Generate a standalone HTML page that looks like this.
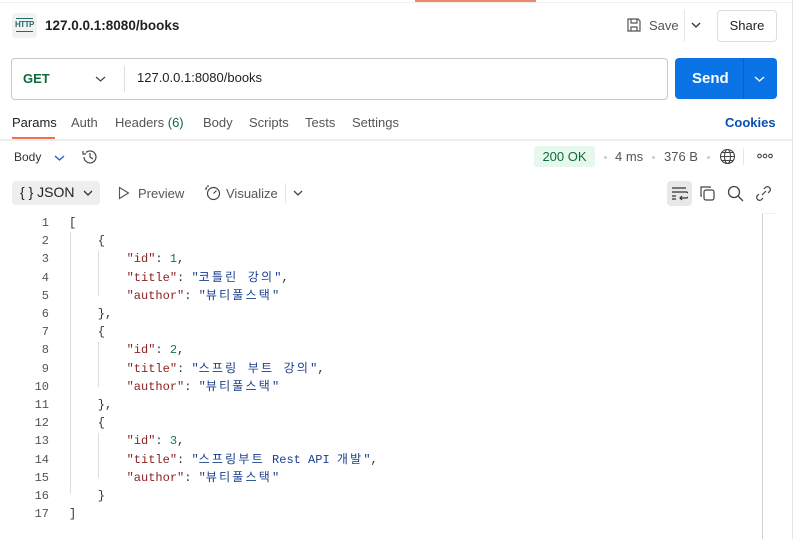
<!DOCTYPE html>
<html><head><meta charset="utf-8"><style>
*{margin:0;padding:0;box-sizing:border-box}
body{width:800px;height:539px;background:#fff;font-family:"Liberation Sans","Noto Sans CJK KR",sans-serif;color:#212121;position:relative;overflow:hidden;font-size:13px}
.a{position:absolute}
.code{font-family:"Liberation Mono","Noto Sans CJK KR",monospace;font-size:12px;white-space:pre;line-height:18.2px}
.k{color:#8a1f1f}.s{color:#1a3f8c}.n{color:#0b7a4f}.p{color:#333}
.h{letter-spacing:2.2px}
</style></head><body>
<div class="a" style="left:0;top:0;width:792px;height:3px;border-bottom:1px solid #eee"></div>
<div class="a" style="left:415px;top:0;width:121px;height:2px;background:#f08a6a"></div>
<div class="a" style="left:792px;top:0;width:1px;height:539px;background:#e6e6e6"></div>
<div class="a" style="left:12px;top:13px;width:25px;height:25px;background:#f2f2f2;border-radius:4px"></div>
<div class="a" style="left:15px;top:20px;font-size:8px;color:#1f6e6e;font-weight:bold;letter-spacing:-0.5px">HTTP</div>
<div class="a" style="left:16px;top:18px;width:17px;height:1px;background:#1f6e6e"></div>
<div class="a" style="left:16px;top:31px;width:17px;height:1px;background:#1f6e6e"></div>
<div class="a" style="left:45px;top:18px;font-size:13.5px;font-weight:bold;color:#222">127.0.0.1:8080/books</div>
<svg class="a" style="left:626px;top:17px" width="16" height="16" viewBox="0 0 16 16" fill="none" stroke="#555" stroke-width="1.2"><path d="M2 2h10l2 2v10H2z M5 2v4h6V2 M5 14v-4h6v4"/></svg>
<div class="a" style="left:649px;top:18px;color:#555;font-size:13px">Save</div>
<div class="a" style="left:684px;top:10px;width:1px;height:32px;background:#e6e6e6"></div>
<svg class="a" style="left:691px;top:21px" width="10" height="8"><path d="M1 2l4 4 4-4" stroke="#333" fill="none" stroke-width="1.3"/></svg>
<div class="a" style="left:717px;top:10px;width:60px;height:32px;border:1px solid #ddd;border-radius:4px;text-align:center;line-height:30px;color:#222">Share</div>
<div class="a" style="left:11px;top:58px;width:657px;height:42px;border:1px solid #c8c8c8;border-radius:4px"></div>
<div class="a" style="left:23px;top:71px;color:#0f6b3c;font-weight:bold;font-size:13px">GET</div>
<svg class="a" style="left:95px;top:75px" width="11" height="8"><path d="M1 2l4.5 4 4.5-4" stroke="#444" fill="none" stroke-width="1.2"/></svg>
<div class="a" style="left:124px;top:66px;width:1px;height:26px;background:#ddd"></div>
<div class="a" style="left:137px;top:70px;color:#222;font-size:13px">127.0.0.1:8080/books</div>
<div class="a" style="left:675px;top:58px;width:102px;height:41px;background:#0a73e6;border-radius:4px"></div>
<div class="a" style="left:743px;top:58px;width:1px;height:41px;background:#0a5fc0"></div>
<div class="a" style="left:692px;top:70px;color:#fff;font-weight:bold;font-size:15px">Send</div>
<svg class="a" style="left:754px;top:75px" width="11" height="8"><path d="M1 2l4.5 4 4.5-4" stroke="#fff" fill="none" stroke-width="1.3"/></svg>
<div class="a" style="top:115px;left:12px;color:#222">Params</div>
<div class="a" style="top:115px;left:71px;color:#555">Auth</div>
<div class="a" style="top:115px;left:115px;color:#555">Headers <span style="color:#0f6b3c">(6)</span></div>
<div class="a" style="top:115px;left:203px;color:#555">Body</div>
<div class="a" style="top:115px;left:249px;color:#555">Scripts</div>
<div class="a" style="top:115px;left:305px;color:#555">Tests</div>
<div class="a" style="top:115px;left:352px;color:#555">Settings</div>
<div class="a" style="top:115px;left:725px;color:#0b4fb0;font-weight:bold">Cookies</div>
<div class="a" style="left:12px;top:137px;width:43px;height:2px;background:#f07050"></div>
<div class="a" style="left:0;top:139px;width:792px;height:2px;background:#eee"></div>
<div class="a" style="left:14px;top:150px;font-size:12px;color:#333">Body</div>
<svg class="a" style="left:54px;top:154px" width="11" height="8"><path d="M1 2l4.5 4 4.5-4" stroke="#1b5fc0" fill="none" stroke-width="1.3"/></svg>
<svg class="a" style="left:81px;top:148px" width="18" height="18" viewBox="0 0 18 18" fill="none" stroke="#444" stroke-width="1.2"><path d="M3 9a6 6 0 1 0 2-4.5M2 3v3h3M9 5v4l3 2"/></svg>
<div class="a" style="left:534px;top:146px;width:61px;height:21px;background:#e6f8ee;border-radius:3px;color:#0f6b3c;text-align:center;line-height:21px">200 OK</div>
<div class="a" style="left:604px;top:156px;width:3px;height:3px;background:#ccc;border-radius:50%"></div>
<div class="a" style="left:615px;top:149px;color:#555">4 ms</div>
<div class="a" style="left:652px;top:156px;width:3px;height:3px;background:#ccc;border-radius:50%"></div>
<div class="a" style="left:664px;top:149px;color:#555">376 B</div>
<div class="a" style="left:707px;top:156px;width:3px;height:3px;background:#ccc;border-radius:50%"></div>
<svg class="a" style="left:719px;top:148px" width="17" height="17" viewBox="0 0 17 17" fill="none" stroke="#444" stroke-width="1.1"><circle cx="8.5" cy="8.5" r="7"/><ellipse cx="8.5" cy="8.5" rx="3" ry="7"/><path d="M1.5 8.5h14M3 4.5h11M3 12.5h11"/></svg>
<div class="a" style="left:743px;top:148px;width:1px;height:17px;background:#e6e6e6"></div>
<svg class="a" style="left:757px;top:153px" width="16" height="6" fill="none" stroke="#444" stroke-width="1.1"><circle cx="2.5" cy="3" r="1.8"/><circle cx="8" cy="3" r="1.8"/><circle cx="13.5" cy="3" r="1.8"/></svg>
<div class="a" style="left:12px;top:181px;width:88px;height:24px;background:#eee;border-radius:4px"></div>
<div class="a" style="left:20px;top:184px;font-size:14px;color:#222">{ } JSON</div>
<svg class="a" style="left:83px;top:190px" width="10" height="7"><path d="M1 1l4 4 4-4" stroke="#333" fill="none" stroke-width="1.3"/></svg>
<svg class="a" style="left:118px;top:186px" width="12" height="14"><path d="M1.5 1.5v11l9-5.5z" stroke="#555" fill="none" stroke-width="1.1"/></svg>
<div class="a" style="left:138px;top:186px;color:#555">Preview</div>
<svg class="a" style="left:204px;top:184px" width="17" height="17" viewBox="0 0 17 17" fill="none" stroke="#444" stroke-width="1.2"><circle cx="9.5" cy="9.5" r="6"/><path d="M9.5 9.5l3-3M2 3l1 1M4 1v2M1 5h2"/></svg>
<div class="a" style="left:226px;top:186px;color:#555">Visualize</div>
<div class="a" style="left:285px;top:183px;width:1px;height:20px;background:#e6e6e6"></div>
<svg class="a" style="left:293px;top:190px" width="10" height="7"><path d="M1 1l4 4 4-4" stroke="#444" fill="none" stroke-width="1.3"/></svg>
<div class="a" style="left:667px;top:181px;width:25px;height:25px;background:#e8e8e8;border-radius:4px"></div>
<svg class="a" style="left:671px;top:186px" width="17" height="15" fill="none" stroke="#333" stroke-width="1.2"><path d="M1 2h14M1 6h14a3 3 0 0 1 0 6H9M11 10l-2 2 2 2M1 10h4M1 13h4"/></svg>
<svg class="a" style="left:699px;top:185px" width="17" height="17" fill="none" stroke="#444" stroke-width="1.2"><rect x="5" y="5" width="10" height="10" rx="2"/><path d="M11 3V2H2v9h1"/></svg>
<svg class="a" style="left:727px;top:185px" width="17" height="17" fill="none" stroke="#444" stroke-width="1.3"><circle cx="7" cy="7" r="5.5"/><path d="M11 11l5 5"/></svg>
<svg class="a" style="left:755px;top:185px" width="17" height="17" fill="none" stroke="#444" stroke-width="1.2"><path d="M7 10l4-4M9 4l2-2a3 3 0 0 1 4 4l-2 2M8 13l-2 2a3 3 0 0 1-4-4l2-2"/></svg>
<div class="a" style="left:762px;top:214px;width:1px;height:325px;background:#d0d0d0"></div>
<div class="a" style="left:762px;top:213px;width:15px;height:1px;background:#eee"></div>
<div class="a" style="left:70px;top:232px;width:1px;height:262px;background:#ddd"></div>
<div class="a" style="left:98px;top:251px;width:1px;height:45px;background:#ddd"></div>
<div class="a" style="left:98px;top:342px;width:1px;height:45px;background:#ddd"></div>
<div class="a" style="left:98px;top:433px;width:1px;height:45px;background:#ddd"></div>
<div class="a code" style="left:27px;top:214px;color:#555;text-align:right;width:22px">1
2
3
4
5
6
7
8
9
10
11
12
13
14
15
16
17</div>
<div class="a code p" style="left:69px;top:214px">[
    {
        <span class="k">"id"</span>: <span class="n">1</span>,
        <span class="k">"title"</span>: <span class="s">"<span class="h">코틀린 강의</span>"</span>,
        <span class="k">"author"</span>: <span class="s">"<span class="h">뷰티풀스택</span>"</span>
    },
    {
        <span class="k">"id"</span>: <span class="n">2</span>,
        <span class="k">"title"</span>: <span class="s">"<span class="h">스프링 부트 강의</span>"</span>,
        <span class="k">"author"</span>: <span class="s">"<span class="h">뷰티풀스택</span>"</span>
    },
    {
        <span class="k">"id"</span>: <span class="n">3</span>,
        <span class="k">"title"</span>: <span class="s">"<span class="h">스프링부트</span> Rest API <span class="h">개발</span>"</span>,
        <span class="k">"author"</span>: <span class="s">"<span class="h">뷰티풀스택</span>"</span>
    }
]</div>
</body></html>
